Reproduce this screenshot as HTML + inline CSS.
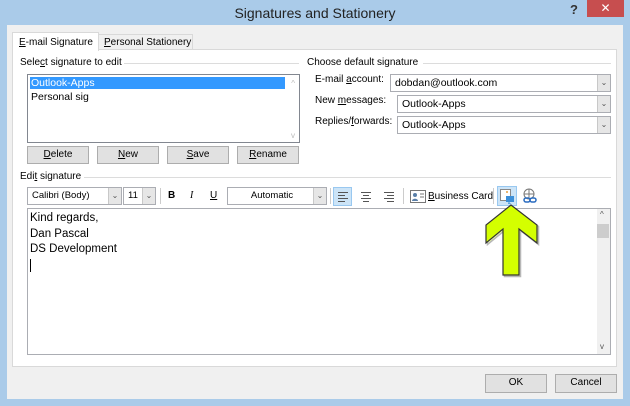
<!DOCTYPE html><html><head><style>
*{box-sizing:border-box}body{margin:0;width:630px;height:406px;background:#aacbe9;font-family:"Liberation Sans",sans-serif;font-size:10px;color:#000;position:relative;overflow:hidden}
.a{position:absolute;white-space:nowrap}
.btn{position:absolute;background:#e1e1e1;border:1px solid #adadad;text-align:center;line-height:16px;font-size:10px}
.cb{position:absolute;background:#fff;border:1px solid #abadb3;line-height:16px;padding-left:4px;font-size:10.5px;white-space:nowrap}
.cb .ar{position:absolute;right:0;top:0;bottom:0;width:13px;background:#e6e6e6;border-left:1px solid #c8c8c8;text-align:center;font-size:8px;color:#555}
.lbl{position:absolute;font-size:10px;white-space:nowrap}
.hr{position:absolute;height:1px;background:#dcdcdc}
</style></head><body>
<div class="a" style="left:0;top:0;width:630px;height:26px;text-align:center;font-size:14px;line-height:26px;color:#222">Signatures and Stationery</div>
<div class="a" style="left:570px;top:2px;font-size:13px;font-weight:bold;color:#333">?</div>
<div class="a" style="left:587px;top:0;width:37px;height:17px;background:#c74e4f;color:#fff;text-align:center;font-size:12px;line-height:17px">✕</div>
<div class="a" style="left:7px;top:25px;width:616px;height:374px;background:#f0f0f0"></div>
<div class="a" style="left:12px;top:49px;width:605px;height:318px;background:#fff;border:1px solid #d9d9d9"></div>
<div class="a" style="left:12px;top:32px;width:87px;height:19px;background:#fff;border:1px solid #d9d9d9;border-bottom:none;padding:4px 0 0 6px"><u>E</u>-mail Signature</div>
<div class="a" style="left:98px;top:34px;width:95px;height:15px;background:#f0f0f0;border:1px solid #d9d9d9;border-bottom:none;padding:2px 0 0 5px"><u>P</u>ersonal Stationery</div>
<div class="lbl" style="left:20px;top:57px">Sele<u>c</u>t signature to edit</div><div class="hr" style="left:124px;top:63px;width:175px"></div>
<div class="a" style="left:27px;top:74px;width:273px;height:69px;border:1px solid #828790;background:#fff;font-size:10.5px">
<div style="margin:2px;background:#3399ff;color:#fff;height:12px;line-height:12px;padding-left:1px;width:255px">Outlook-Apps</div><div style="padding-left:3px;line-height:12px">Personal sig</div>
<div class="a" style="right:4px;top:4px;font-size:8px;color:#bbb">^</div><div class="a" style="right:4px;bottom:2px;font-size:8px;color:#bbb">v</div></div>
<div class="btn" style="left:27px;top:146px;width:62px;height:18px"><u>D</u>elete</div>
<div class="btn" style="left:97px;top:146px;width:62px;height:18px"><u>N</u>ew</div>
<div class="btn" style="left:167px;top:146px;width:62px;height:18px"><u>S</u>ave</div>
<div class="btn" style="left:237px;top:146px;width:62px;height:18px"><u>R</u>ename</div>
<div class="lbl" style="left:307px;top:57px">Choose default signature</div><div class="hr" style="left:423px;top:63px;width:188px"></div>
<div class="lbl" style="left:315px;top:74px">E-mail <u>a</u>ccount:</div>
<div class="cb" style="left:390px;top:74px;width:221px;height:18px">dobdan@outlook.com<div class="ar">⌄</div></div>
<div class="lbl" style="left:315px;top:95px">New <u>m</u>essages:</div>
<div class="cb" style="left:397px;top:95px;width:214px;height:18px">Outlook-Apps<div class="ar">⌄</div></div>
<div class="lbl" style="left:315px;top:116px">Replies/<u>f</u>orwards:</div>
<div class="cb" style="left:397px;top:116px;width:214px;height:18px">Outlook-Apps<div class="ar">⌄</div></div>
<div class="lbl" style="left:20px;top:171px">Edi<u>t</u> signature</div><div class="hr" style="left:84px;top:177px;width:527px"></div>
<div class="cb" style="left:27px;top:187px;width:95px;height:18px;font-size:9.5px">Calibri (Body)<div class="ar">⌄</div></div>
<div class="cb" style="left:123px;top:187px;width:33px;height:18px;font-size:9.5px">11<div class="ar">⌄</div></div>
<div class="a" style="left:160px;top:188px;width:1px;height:16px;background:#ccc"></div>
<div class="lbl" style="left:168px;top:190px;font-weight:bold">B</div>
<div class="lbl" style="left:190px;top:190px;font-style:italic;font-family:'Liberation Serif'">I</div>
<div class="lbl" style="left:210px;top:190px;text-decoration:underline">U</div>
<div class="cb" style="left:227px;top:187px;width:100px;height:18px;text-align:center;padding-right:14px;font-size:9.5px">Automatic<div class="ar">⌄</div></div>
<div class="a" style="left:330px;top:188px;width:1px;height:16px;background:#ccc"></div>
<div class="a" style="left:333px;top:187px;width:19px;height:19px;background:#cce4f7;border:1px solid #99c8f0"></div>
<svg class="a" style="left:333px;top:187px" width="70" height="19"><g stroke="#555" stroke-width="1"><path d="M5 5.5h10M5 8.5h7M5 11.5h10M5 14.5h7"/><path d="M28 5.5h10M30 8.5h6M28 11.5h10M30 14.5h6"/><path d="M51 5.5h10M54 8.5h7M51 11.5h10M54 14.5h7"/></g></svg>
<div class="a" style="left:403px;top:188px;width:1px;height:16px;background:#ccc"></div>
<svg class="a" style="left:410px;top:190px" width="16" height="13"><rect x="0.5" y="0.5" width="15" height="12" fill="#fff" stroke="#777"/><circle cx="5" cy="5" r="2" fill="#5a7fa8"/><path d="M2 11c0-3 6-3 6 0z" fill="#5a7fa8"/><path d="M10 4h4M10 7h4" stroke="#777"/></svg>
<div class="lbl" style="left:428px;top:191px"><u>B</u>usiness Card</div>
<div class="a" style="left:493px;top:188px;width:1px;height:16px;background:#ccc"></div>
<div class="a" style="left:497px;top:186px;width:20px;height:20px;background:#cce4f7;border:1px solid #99c8f0"></div>
<svg class="a" style="left:500px;top:189px" width="15" height="15"><rect x="0.5" y="0.5" width="10" height="11" fill="#fff" stroke="#888"/><circle cx="7" cy="3" r="1" fill="#e8a040"/><rect x="6" y="7" width="8" height="6" fill="#3c8fd8"/><path d="M9 13v2M8 15h3" stroke="#3c8fd8"/></svg>
<svg class="a" style="left:522px;top:188px" width="16" height="16"><circle cx="7" cy="6" r="5" fill="none" stroke="#777"/><path d="M2 6h10M7 1v10" stroke="#777"/><rect x="2" y="10" width="6" height="4" rx="2" fill="none" stroke="#2a6cc0" stroke-width="1.5"/><rect x="8" y="10" width="6" height="4" rx="2" fill="none" stroke="#2a6cc0" stroke-width="1.5"/></svg>
<div class="a" style="left:27px;top:208px;width:584px;height:147px;border:1px solid #abadb3;background:#fff;font-family:'Liberation Sans',sans-serif;font-size:11.5px;line-height:15.5px;padding:2px 2px">Kind regards,<br>Dan Pascal<br>DS Development<br><span style="display:inline-block;width:1px;height:13px;background:#000;margin-top:1px"></span></div>
<div class="a" style="left:597px;top:209px;width:13px;height:145px;background:#f0f0f0"></div>
<div class="a" style="left:597px;top:224px;width:12px;height:14px;background:#cdcdcd"></div>
<div class="a" style="left:600px;top:210px;font-size:8px;color:#555">^</div>
<div class="a" style="left:600px;top:342px;font-size:8px;color:#555">v</div>
<svg class="a" style="left:480px;top:200px" width="65" height="80"><path d="M31 5L6 25V43L23 29V75H39V29L57 43V25Z" fill="#d4ff00" stroke="#333" stroke-width="1.5" transform="translate(1.5,1.5)" opacity="0.35"/><path d="M31 5L6 25V43L23 29V75H39V29L57 43V25Z" fill="#d4ff00" stroke="#333" stroke-width="1.2"/></svg>
<div class="btn" style="left:485px;top:374px;width:62px;height:19px">OK</div>
<div class="btn" style="left:555px;top:374px;width:62px;height:19px">Cancel</div>
</body></html>
